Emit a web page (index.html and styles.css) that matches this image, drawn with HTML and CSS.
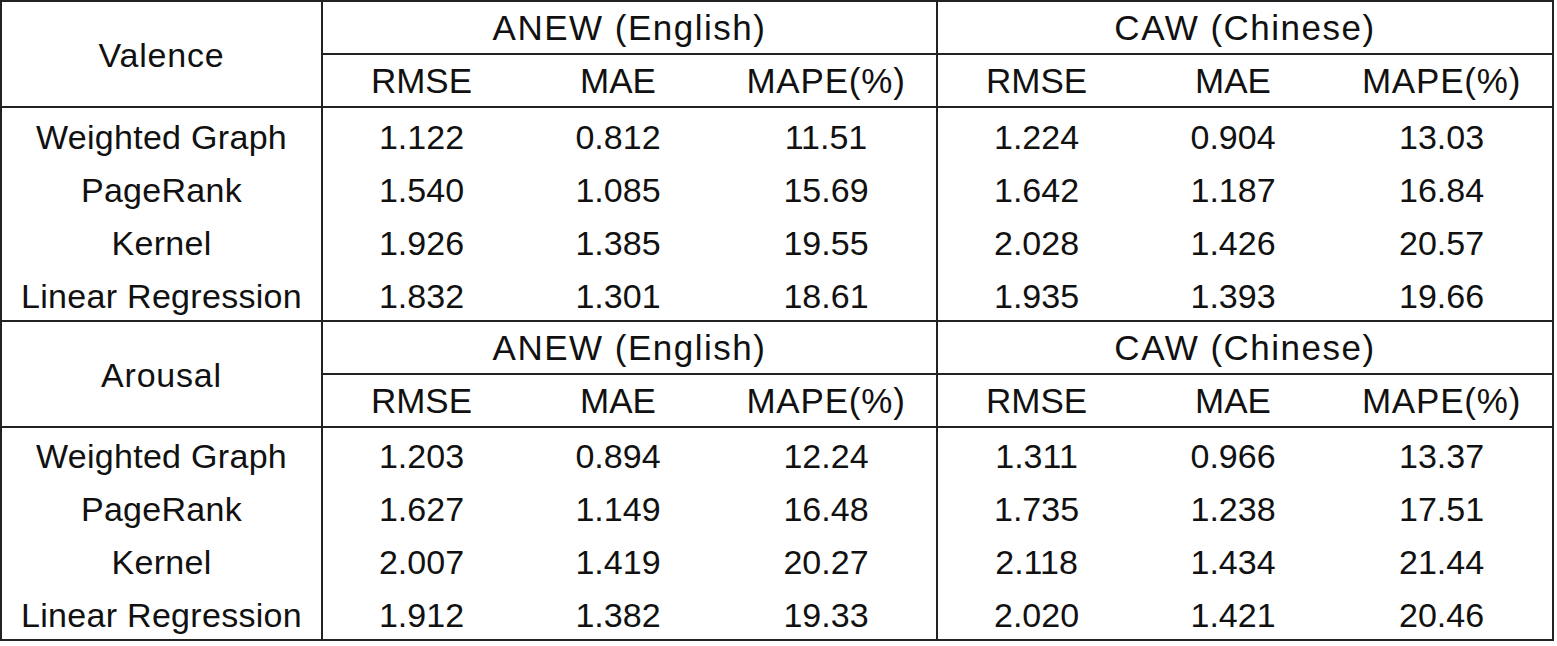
FILE: index.html
```html
<!DOCTYPE html>
<html>
<head>
<meta charset="utf-8">
<link rel="stylesheet" href="styles.css">
</head>
<body>
<table class="results">
  <colgroup>
    <col class="c-label">
    <col class="c-a"><col class="c-b"><col class="c-c">
    <col class="c-a"><col class="c-b"><col class="c-c2">
  </colgroup>
  <tbody>
    <tr class="h1">
      <td rowspan="2" class="lbl head">Valence</td>
      <td colspan="3" class="grp end">ANEW (English)</td>
      <td colspan="3" class="grp">CAW (Chinese)</td>
    </tr>
    <tr class="h2">
      <td>RMSE</td><td>MAE</td><td class="end mape">MAPE(%)</td>
      <td>RMSE</td><td>MAE</td><td class="mape">MAPE(%)</td>
    </tr>
    <tr class="d tall"><td class="lbl">Weighted Graph</td><td>1.122</td><td>0.812</td><td class="end">11.51</td><td>1.224</td><td>0.904</td><td>13.03</td></tr>
    <tr class="d"><td class="lbl">PageRank</td><td>1.540</td><td>1.085</td><td class="end">15.69</td><td>1.642</td><td>1.187</td><td>16.84</td></tr>
    <tr class="d tall"><td class="lbl">Kernel</td><td>1.926</td><td>1.385</td><td class="end">19.55</td><td>2.028</td><td>1.426</td><td>20.57</td></tr>
    <tr class="d"><td class="lbl">Linear Regression</td><td>1.832</td><td>1.301</td><td class="end">18.61</td><td>1.935</td><td>1.393</td><td>19.66</td></tr>
    <tr class="h1 block">
      <td rowspan="2" class="lbl head">Arousal</td>
      <td colspan="3" class="grp end">ANEW (English)</td>
      <td colspan="3" class="grp">CAW (Chinese)</td>
    </tr>
    <tr class="h2">
      <td>RMSE</td><td>MAE</td><td class="end mape">MAPE(%)</td>
      <td>RMSE</td><td>MAE</td><td class="mape">MAPE(%)</td>
    </tr>
    <tr class="d"><td class="lbl">Weighted Graph</td><td>1.203</td><td>0.894</td><td class="end">12.24</td><td>1.311</td><td>0.966</td><td>13.37</td></tr>
    <tr class="d"><td class="lbl">PageRank</td><td>1.627</td><td>1.149</td><td class="end">16.48</td><td>1.735</td><td>1.238</td><td>17.51</td></tr>
    <tr class="d tall"><td class="lbl">Kernel</td><td>2.007</td><td>1.419</td><td class="end">20.27</td><td>2.118</td><td>1.434</td><td>21.44</td></tr>
    <tr class="d"><td class="lbl">Linear Regression</td><td>1.912</td><td>1.382</td><td class="end">19.33</td><td>2.020</td><td>1.421</td><td>20.46</td></tr>
  </tbody>
</table>
</body>
</html>
```

FILE: styles.css
```css
html, body {
  margin: 0;
  padding: 0;
  background: #ffffff;
}

.results {
  border-collapse: collapse;
  table-layout: fixed;
  width: 1553px;
  margin: 0;
  border: 2px solid #222;
  font-family: "Liberation Sans", Arial, sans-serif;
  font-size: 34px;
  color: #111;
}

.c-label { width: 321px; }
.c-a { width: 198px; }
.c-b { width: 196px; }
.c-c { width: 221px; }
.c-c2 { width: 222px; }

.results td {
  border: none;
  padding: 0;
  text-align: center;
  vertical-align: middle;
  height: 53px;
  line-height: 1;
  box-sizing: border-box;
}

.results tr.tall td {
  height: 54px;
}

/* data rows: text sits slightly low in its row */
.results tr.d td {
  padding-top: 4px;
}

.results tr.d td.lbl {
  letter-spacing: 0.3px;
}

.results td.lbl {
  border-right: 2px solid #222;
}

.results td.end {
  border-right: 2px solid #222;
}

.results tr.h1 td,
.results tr.h2 td {
  font-size: 35px;
}

.results tr.h1 td.head {
  font-size: 34px;
  padding-top: 1px;
  letter-spacing: 0.8px;
  border-bottom: 2px solid #222;
}

.results td.grp {
  border-bottom: 2px solid #222;
  letter-spacing: 1.5px;
}

.results td.mape {
  letter-spacing: 0.8px;
}

.results tr.h2 td {
  border-bottom: 2px solid #222;
}

.results tr.block td {
  border-top: 2px solid #222;
}
```
